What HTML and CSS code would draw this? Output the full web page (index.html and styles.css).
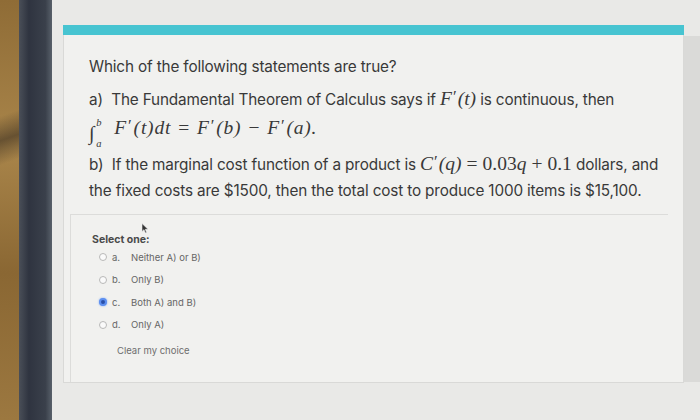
FILE: index.html
```html
<!DOCTYPE html>
<html>
<head>
<meta charset="utf-8">
<link rel="stylesheet" href="styles.css">
</head>
<body>
<div class="desk">
  <div class="wood"><div class="woodshade"></div></div>
  <div class="bezel"></div>
  <div class="screen">
    <div class="card">
      <div class="bar"></div>
      <div class="body">
        <p class="q">Which of the following statements are true?</p>
        <p class="para">a)&nbsp; The Fundamental Theorem of Calculus says if <span class="m">F<span class="pr">′</span>(t)</span> is continuous, then<br><span class="m wide"><span class="int"><span class="sign">∫</span><span class="lims"><span class="up">b</span><span class="lo">a</span></span></span>F<span class="pr">′</span>(t)dt<span class="op">=</span>F<span class="pr">′</span>(b)<span class="op">−</span>F<span class="pr">′</span>(a).</span></p>
        <p class="para">b)&nbsp; If the marginal cost function of a product is <span class="m">C<span class="pr">′</span>(q)<span class="op">=</span><span class="n">0.03</span>q<span class="op">+</span><span class="n">0.1</span></span> dollars, and<br>the fixed costs are $1500, then the total cost to produce 1000 items is $15,100.</p>
        <div class="answer">
          <div class="sel">Select one:</div>
          <div class="opt"><span class="radio"></span><span class="let">a.</span><span>Neither A) or B)</span></div>
          <div class="opt"><span class="radio"></span><span class="let">b.</span><span>Only B)</span></div>
          <div class="opt"><span class="radio on"></span><span class="let">c.</span><span>Both A) and B)</span></div>
          <div class="opt"><span class="radio"></span><span class="let">d.</span><span>Only A)</span></div>
          <div class="clear">Clear my choice</div>
          <svg class="cursor" width="8" height="11" viewBox="0 0 8 11"><path d="M1 0.5 L1 8.5 L3 6.7 L4.4 10 L5.6 9.5 L4.3 6.3 L7 6.3 Z" fill="#333" stroke="#eee" stroke-width="0.6"/></svg>
        </div>
      </div>
    </div>
    <div class="rshade"></div>
  </div>
</div>
</body>
</html>
```
FILE: styles.css
```css
html, body { margin: 0; padding: 0; }
body { width: 700px; height: 420px; overflow: hidden; background: #e7e7e5; font-family: Inter, "Noto Sans", sans-serif; }
.desk { display: flex; height: 420px; }
.wood { position: relative; width: 19px; background: linear-gradient(180deg, #8f6c36 0%, #a9854a 35%, #8a6733 65%, #9c7840 100%); }
.woodshade { position: absolute; left: 0; top: 100px; width: 19px; height: 75px; background: linear-gradient(160deg, rgba(40,30,20,0) 20%, rgba(50,40,30,0.55) 50%, rgba(40,30,20,0) 80%); }
.bezel { width: 33px; background: linear-gradient(90deg, #4a4f58 0%, #2f3440 30%, #3a404b 80%, #58606a 100%); }
.screen { flex: 1; position: relative; background: #e9e9e7; padding: 25px 16px 0 11px; display: flex; align-items: flex-start; }
.rshade { position: absolute; right: 0; top: 36px; width: 16px; height: 346px; background: #dadad8; }
.card { flex: 1; height: 358px; background: #f1f1ef; border: 1px solid #d9d9d7; border-top: none; box-sizing: border-box; display: flex; flex-direction: column; }
.bar { height: 10px; background: #47c4d1; margin: 0 -1px; }
.body { flex: 1; display: flex; flex-direction: column; padding: 0 0 0 6px; color: #393939; }
.q { margin: 22px 0 0 19px; font-size: 15.3px; line-height: 20px; letter-spacing: -0.15px; }
.para { margin: 7px 0 0 19px; font-size: 15.3px; line-height: 26px; letter-spacing: -0.15px; }
.para + .para { margin-top: 4px; }
.m { font-family: "Liberation Serif", serif; font-style: italic; font-size: 19.5px; letter-spacing: 0; }
.m .n, .m .op { font-style: normal; }
.op { padding: 0 5px; }
.m.wide { letter-spacing: 0.8px; }
.m.wide .op { padding: 0 7px; }
.pr { font-style: normal; font-size: 17px; vertical-align: 3px; margin-left: 1px; margin-right: 1px; }
.int { display: inline-flex; align-items: stretch; vertical-align: -6px; height: 24px; font-style: normal; margin-right: 12px; }
.sign { font-size: 20px; line-height: 24px; }
.lims { display: flex; flex-direction: column; justify-content: space-between; font-style: italic; font-size: 10.5px; line-height: 10px; padding-left: 1px; }
.lims .up { margin-top: -3px; }
.lims .lo { margin-bottom: -4px; }
.answer { position: relative; flex: 1; margin-top: 10px; margin-right: 15px; border-top: 1px solid #dcdcda; border-left: 1px solid #dcdcda; padding: 18px 0 0 21px; font-size: 9.5px; color: #666; }
.sel { font-weight: 700; font-size: 10.5px; line-height: 13px; color: #4a4a4a; margin-bottom: 0; }
.opt { display: flex; align-items: center; height: 22.5px; padding-left: 7px; }
.radio { width: 8px; height: 8px; border-radius: 50%; border: 1px solid #b8b8b8; background: #fafafa; margin-right: 5px; box-sizing: border-box; }
.radio.on { border: 2.5px solid #5d8ff0; background: #2a4fa8; box-shadow: 0 0 2px #7aa5f5; }
.let { width: 19px; }
.clear { margin: 9px 0 0 25px; color: #6e6e6e; }
.cursor { position: absolute; left: 70px; top: 8px; }
```
